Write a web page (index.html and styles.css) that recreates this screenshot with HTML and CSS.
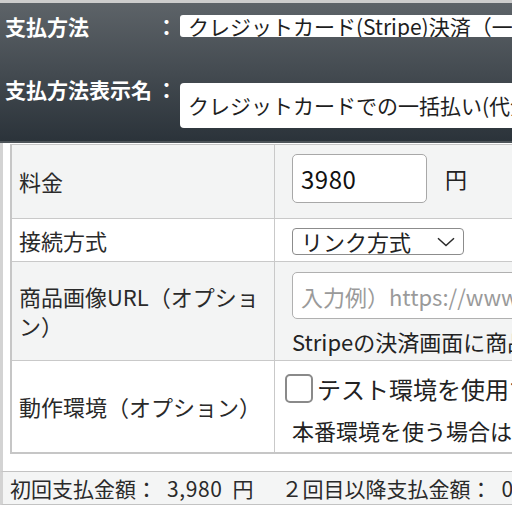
FILE: index.html
```html
<!DOCTYPE html>
<html lang="ja">
<head>
<meta charset="utf-8">
<title>支払方法設定</title>
<link rel="stylesheet" href="styles.css">
</head>
<body>
<div class="wrap">
  <div class="header">
    <div class="hlabel"><span>支払方法</span><span>：</span></div>
    <div class="hselect">クレジットカード(Stripe)決済（一括払い）</div>
    <div class="hlabel"><span>支払方法表示名</span><span>：</span></div>
    <div class="hinput">クレジットカードでの一括払い(代金引換不可)</div>
  </div>
  <div class="content">
    <div class="table">
      <div class="lab gray">料金</div>
      <div class="val gray r1">
        <input class="price" type="text" value="3980">
        <span class="yen">円</span>
      </div>
      <div class="lab">接続方式</div>
      <div class="val r2">
        <div class="select"><span>リンク方式</span>
          <svg class="chev" width="18" height="10" viewBox="0 0 18 10"><path d="M1 1.2 L9 8.6 L17 1.2" fill="none" stroke="#2a2a2a" stroke-width="1.5"/></svg>
        </div>
      </div>
      <div class="lab gray">商品画像URL（オプション）</div>
      <div class="val gray r3">
        <input class="url" type="text" placeholder="入力例）https://www.example.com/images/item.png">
        <div class="note">Stripeの決済画面に商品画像を表示する場合に入力してください</div>
      </div>
      <div class="lab last">動作環境（オプション）</div>
      <div class="val last r4">
        <label class="check-row"><input class="check" type="checkbox"><span>テスト環境を使用する</span></label>
        <div class="note">本番環境を使う場合はチェックを外してください</div>
      </div>
    </div>
  </div>
  <div class="footer">
    <span>初回支払金額：</span><span class="amt">3,980</span><span class="unit">円</span><span class="sep">２回目以降支払金額：</span><span class="amt2">0</span><span class="unit">円</span>
  </div>
</div>
</body>
</html>
```
FILE: styles.css
```css
html, body {
  margin: 0;
  padding: 0;
  overflow: hidden;
  background: #ffffff;
}
body {
  font-family: "Noto Sans CJK JP", "Noto Sans", sans-serif;
  color: #222222;
}
.wrap {
  width: 760px;
  border-top: 3px solid #cdcdcd;
}
.header {
  background: linear-gradient(#5d6368, #2b333a);
  border-bottom: 2px solid #4d5459;
  padding: 12px 0 13px 5px;
  display: grid;
  grid-template-columns: 172px 1fr;
  column-gap: 3px;
  row-gap: 41px;
  align-items: start;
}
.hlabel {
  display: flex;
  justify-content: space-between;
  color: #ffffff;
  font-weight: bold;
  font-size: 21px;
  line-height: 22px;
}
.hselect {
  background: #ffffff;
  border-radius: 3px;
  height: 22px;
  font-size: 21px;
  line-height: 22px;
  padding-left: 8px;
  color: #1e1e1e;
  white-space: nowrap;
  overflow: hidden;
}
.hinput {
  margin-top: 5px;
  height: 45px;
  background: #ffffff;
  border-radius: 4px;
  font-size: 21px;
  line-height: 45px;
  padding-left: 8px;
  color: #1e1e1e;
  white-space: nowrap;
  overflow: hidden;
}
.content {
  border-left: 3px solid #d3d3d3;
  padding: 1px 0 17px 7px;
}
.table {
  display: grid;
  grid-template-columns: 263px 1fr;
  grid-template-rows: 74px 43px 99px 91px;
  border: 1px solid #c6c6c6;
  border-left-width: 2px;
  border-bottom-width: 2px;
  border-right: none;
}
.lab {
  box-sizing: border-box;
  display: flex;
  align-items: center;
  padding: 0 8px 0 7px;
  font-size: 22px;
  line-height: 29px;
  color: #2a2a2a;
  border-right: 1px solid #c9c9c9;
  border-bottom: 1px solid #c9c9c9;
}
.val {
  box-sizing: border-box;
  padding-left: 17px;
  border-bottom: 1px solid #c9c9c9;
  font-size: 22px;
  color: #222222;
}
.last {
  border-bottom: none;
}
.gray {
  background: #f3f4f4;
}
.r1 {
  display: flex;
  align-items: flex-start;
  padding-top: 9px;
}
.price {
  box-sizing: border-box;
  width: 135px;
  height: 49px;
  margin: 0;
  border: 1px solid #a8a8a8;
  border-radius: 5px;
  background: #ffffff;
  font-family: inherit;
  font-size: 24px;
  letter-spacing: 0.5px;
  color: #111111;
  padding: 0 8px;
}
.yen {
  margin-left: 18px;
  line-height: 49px;
}
.r2 {
  padding-top: 9px;
}
.select {
  box-sizing: border-box;
  width: 172px;
  height: 27px;
  border: 1px solid #8c8c8c;
  border-radius: 4px;
  background: #ffffff;
  display: flex;
  align-items: center;
  justify-content: space-between;
  padding: 0 8px 0 8px;
  font-size: 22px;
  line-height: 25px;
}
.r3 {
  padding-top: 10px;
}
.url {
  box-sizing: border-box;
  display: block;
  width: 700px;
  height: 47px;
  margin: 0;
  border: 1px solid #b0b0b0;
  border-radius: 5px;
  background: #ffffff;
  font-family: inherit;
  font-size: 22px;
  padding: 0 8px;
  color: #222222;
}
.url::placeholder {
  color: #9a9a9a;
}
.note {
  margin-top: 7px;
  line-height: 30px;
  white-space: nowrap;
}
.r4 {
  padding-top: 13px;
  padding-left: 10px;
}
.r4 .note {
  margin-top: 12px;
  margin-left: 7px;
}
.check-row {
  display: flex;
  align-items: center;
  font-size: 24px;
  line-height: 29px;
  white-space: nowrap;
}
.check {
  appearance: none;
  -webkit-appearance: none;
  box-sizing: border-box;
  width: 28px;
  height: 29px;
  margin: 0 4px 0 0;
  border: 2px solid #8a8a8a;
  border-radius: 5px;
  background: #ffffff;
}
.footer {
  box-sizing: border-box;
  height: 34px;
  border-left: 3px solid #d3d3d3;
  border-top: 1px solid #c3c3c3;
  border-bottom: 1px solid #c3c3c3;
  background: #f4f5f5;
  padding-left: 7px;
  font-size: 21px;
  line-height: 32px;
  white-space: nowrap;
  color: #2a2a2a;
}
.amt {
  margin-left: 10px;
  letter-spacing: 0.6px;
}
.unit {
  margin-left: 10px;
}
.sep {
  margin-left: 28px;
}
.amt2 {
  margin-left: 10px;
}
```
